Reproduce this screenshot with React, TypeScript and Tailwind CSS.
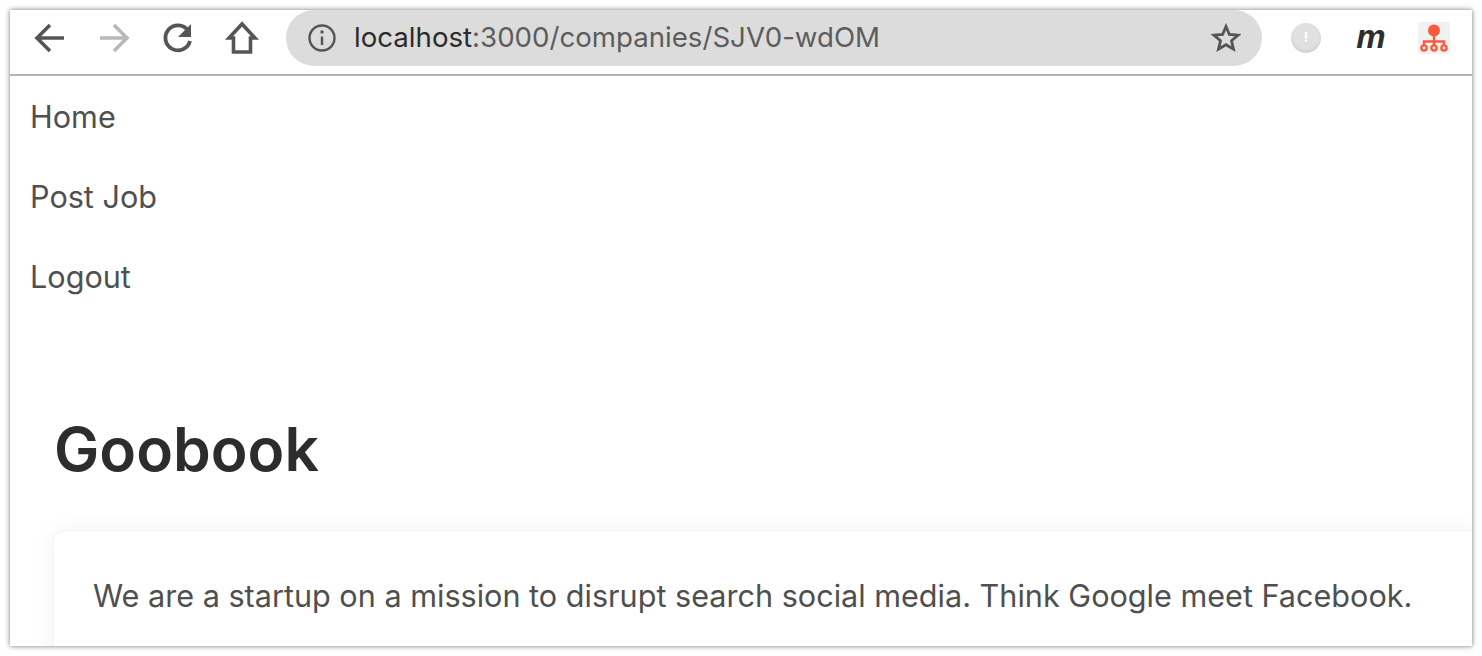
import React from "react";

export default function App() {
  return (
    <div className="h-[656px] w-[1482px] overflow-hidden bg-white p-[10px]" style={{ fontFamily: "Inter, 'Liberation Sans', sans-serif" }}>
      <div className="flex h-full w-full flex-col overflow-hidden bg-white shadow-[0_0_5px_rgba(0,0,0,0.55)]">
        <div className="flex h-[66px] shrink-0 items-start border-b-2 border-[#b4b4b4] bg-white">
          <div className="ml-[20px] flex h-[56px] items-center gap-[24px]">
            <svg width="40" height="40" viewBox="0 0 40 40" fill="none" stroke="#555" strokeWidth="3.6"><path d="M34 20H8M20 7 7 20l13 13" /></svg>
            <svg width="40" height="40" viewBox="0 0 40 40" fill="none" stroke="#b8b8b8" strokeWidth="3.6"><path d="M6 20h26M20 7l13 13-13 13" /></svg>
            <svg width="40" height="40" viewBox="0 0 40 40" fill="none" stroke="#555" strokeWidth="3.8"><path d="M30 12.5A12.5 12.5 0 1 0 32 23" /><path d="M33 6v13H20z" fill="#555" stroke="none" /></svg>
            <svg width="40" height="40" viewBox="0 0 40 40" fill="none" stroke="#555" strokeWidth="3.6"><path d="M20 6 7 20h4.500v14h17V20H33z" strokeLinejoin="miter" /></svg>
          </div>
          <div className="ml-[24px] flex h-[56px] w-[976px] items-center rounded-full bg-[#dcdcdc] pl-[21px] pr-[21px]">
            <svg width="30" height="30" viewBox="0 0 30 30" fill="none" stroke="#555" strokeWidth="2.4"><circle cx="15" cy="15" r="12.5" /><path d="M15 13.500V22" /><circle cx="15" cy="9" r="1.700" fill="#555" stroke="none" /></svg>
            <div className="ml-[17px] text-[27.65px] leading-none text-[#5d5d5d]"><span className="text-[#2c2c2c]">localhost</span>:3000/companies/SJV0-wdOM</div>
            <svg className="ml-auto" width="30" height="30" viewBox="0 0 30 30" fill="none" stroke="#555" strokeWidth="2.8" strokeLinejoin="miter"><path d="m15 3.500 3.400 8 8.600.7-6.500 5.600 2 8.400-7.500-4.500-7.500 4.500 2-8.400L3 12.200l8.600-.7z" /></svg>
          </div>
          <div className="ml-[29px] mt-[13px] flex h-[30px] w-[30px] items-center justify-center rounded-full bg-[#e0e0e0] text-[13px] font-bold text-white shadow-[inset_0_-2px_3px_rgba(0,0,0,0.08)]">!</div>
          <div className="ml-[35px] mt-[10px] w-[30px] text-center text-[33px] font-bold italic leading-[33px] text-[#2e2e2e]" style={{ fontFamily: "'Liberation Sans', sans-serif" }}>m</div>
          <div className="ml-[32px] mt-[12px] flex h-[32px] w-[32px] items-center justify-center rounded-[3px] bg-[#f1f1f1]">
            <svg width="30" height="30" viewBox="0 0 30 30" fill="none" stroke="#fa5a3c" strokeWidth="2.4"><circle cx="15" cy="7.500" r="6" fill="#fa5a3c" stroke="none" /><path d="M15 13v10M5 23v-4.500h20V23" /><circle cx="5" cy="25" r="2.600" /><circle cx="15" cy="25" r="2.600" /><circle cx="25" cy="25" r="2.600" /></svg>
          </div>
        </div>
        <nav className="flex flex-col pl-[20px] pt-[1px] text-[30.6px] leading-[80px] text-[#505050]">
          <a>Home</a>
          <a>Post Job</a>
          <a>Logout</a>
        </nav>
        <div className="pl-[44px]">
          <h1 className="mt-[96px] text-[60.5px] font-semibold leading-[72px] text-[#2d2d2d]">Goobook</h1>
          <div className="-ml-[1px] mt-[45px] -mr-[12px] h-[300px] rounded-[12px] border border-[#f6f6f6] bg-white pl-[39px] pt-[45px] text-[30.6px] leading-[40px] text-[#4f4f4f] shadow-[0_2px_24px_rgba(0,0,0,0.06)]">
            We are a startup on a mission to disrupt search social media. Think Google meet Facebook.
          </div>
        </div>
      </div>
    </div>
  );
}
